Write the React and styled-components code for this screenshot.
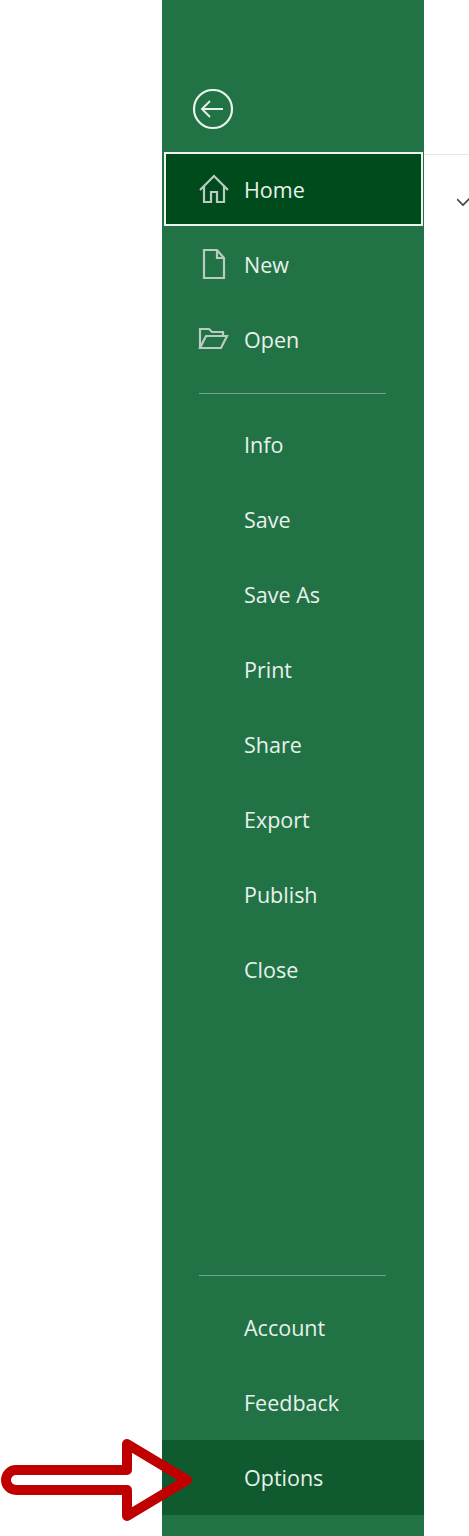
import React from 'react';
import styled, { createGlobalStyle, css } from 'styled-components';

const GlobalStyle = createGlobalStyle`
  html, body {
    margin: 0;
    padding: 0;
    background: #fff;
  }
  body {
    overflow: hidden;
  }
`;

const Page = styled.div`
  position: relative;
  display: flex;
  width: 469px;
  height: 1536px;
  overflow: hidden;
  font-family: 'Open Sans', 'Noto Sans', sans-serif;
`;

const LeftGutter = styled.div`
  width: 162px;
  flex: none;
`;

const Sidebar = styled.nav`
  display: flex;
  flex-direction: column;
  width: 262px;
  flex: none;
  padding: 89px 0 21px;
  box-sizing: border-box;
  background: #217346;
`;

const BackButton = styled.button`
  display: block;
  width: 42px;
  height: 42px;
  margin: 0 0 22px 30px;
  padding: 0;
  border: none;
  background: none;
`;

const MenuRow = styled.div`
  display: flex;
  align-items: center;
  height: 75px;
  padding: 0 0 ${({ $lift }) => $lift ?? 3}px 36px;
  box-sizing: border-box;
  color: #e9f1ec;
  font-size: 21.5px;

  ${({ $current }) =>
    $current &&
    css`
      height: 74px;
      margin: -1px 1px 2px 2px;
      padding: 0 0 0 34px;
      background: #004b1c;
      box-shadow: inset 0 0 0 2px #eef3f0;
    `}

  ${({ $hover }) =>
    $hover &&
    css`
      background: #0f5b2f;
    `}
`;

const IconSlot = styled.span`
  display: flex;
  align-items: center;
  width: 46px;
  flex: none;
`;

const Divider = styled.div`
  height: 1px;
  margin: 15px 38px 14px 37px;
  background: #6fa588;
`;

const Spacer = styled.div`
  flex: 1;
`;

const RightPane = styled.div`
  flex: 1;
  padding-top: 154px;
`;

const PaneRule = styled.div`
  height: 1px;
  background: #e6e6e6;
`;

const Chevron = styled.svg`
  display: block;
  margin: 43px 0 0 33px;
`;

const CalloutArrow = styled.svg`
  position: absolute;
  left: 0;
  top: 1436px;
  pointer-events: none;
`;

const BackIcon = () => (
  <svg width="42" height="42" viewBox="0 0 42 42" fill="none" stroke="#e9f1ec" strokeWidth="2.2">
    <circle cx="21" cy="20" r="19" />
    <path d="M31 20H10M18 12l-8 8 8 8" strokeWidth="1.9" />
  </svg>
);

const HomeIcon = () => (
  <svg width="32" height="32" viewBox="0 0 32 32" fill="none" stroke="#bccbc2" strokeWidth="2.2">
    <path d="M2 17L16 3l14 14" />
    <path d="M6 13v16h7V19h6v10h7V13" />
  </svg>
);

const NewIcon = () => (
  <svg width="32" height="32" viewBox="0 0 32 32" fill="none" stroke="#bccbc2" strokeWidth="2.2">
    <path d="M6 2h13l7 8v20H6z" />
    <path d="M19 2v8h7" />
  </svg>
);

const OpenIcon = () => (
  <svg width="32" height="32" viewBox="0 0 32 32" fill="none" stroke="#bccbc2" strokeWidth="2.2">
    <path d="M2 25V6h9l3 3h11v4" />
    <path d="M2 25h21l6-12H8z" />
  </svg>
);

const topItems = [
  { label: 'Home', icon: <HomeIcon />, current: true },
  { label: 'New', icon: <NewIcon /> },
  { label: 'Open', icon: <OpenIcon /> },
];
const middleItems = ['Info', 'Save', 'Save As', 'Print', 'Share', 'Export', 'Publish', 'Close'];
const bottomItems = ['Account', 'Feedback', 'Options'];

const App = () => (
  <Page>
    <GlobalStyle />
    <LeftGutter />
    <Sidebar>
      <BackButton aria-label="Back">
        <BackIcon />
      </BackButton>
      {topItems.map((item) => (
        <MenuRow key={item.label} $current={item.current}>
          <IconSlot>{item.icon}</IconSlot>
          {item.label}
        </MenuRow>
      ))}
      <Divider />
      {middleItems.map((label) => (
        <MenuRow key={label}>
          <IconSlot />
          {label}
        </MenuRow>
      ))}
      <Spacer />
      <Divider />
      {bottomItems.map((label) => (
        <MenuRow key={label} $lift={1} $hover={label === 'Options'}>
          <IconSlot />
          {label}
        </MenuRow>
      ))}
    </Sidebar>
    <RightPane>
      <PaneRule />
      <Chevron width="14" height="12" viewBox="0 0 14 12" fill="none" stroke="#444" strokeWidth="1.6">
        <path d="M0 1l6 6 8-8" />
      </Chevron>
    </RightPane>
    <CalloutArrow width="200" height="90" viewBox="0 0 200 90" fill="none">
      <path
        d="M127 34V8L187 44 127 80V54H16a10 10 0 0 1 0-20Z"
        stroke="#c00000"
        strokeWidth="10"
        strokeLinejoin="round"
      />
    </CalloutArrow>
  </Page>
);

export default App;
